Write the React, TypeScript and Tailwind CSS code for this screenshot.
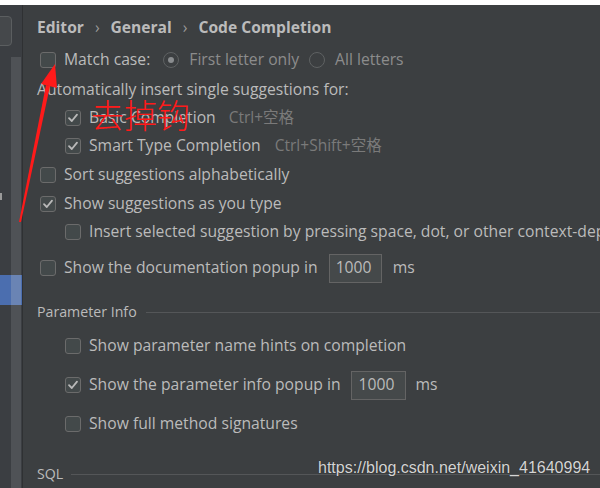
import React from "react";

const font = { fontFamily: '"Open Sans", "Noto Sans CJK SC", sans-serif' };

function Check({ checked }: { checked?: boolean }) {
  return (
    <div className="w-[16px] h-[16px] shrink-0 rounded-[3px] border border-[#6b6b6b] bg-[#43494a] flex items-center justify-center">
      {checked && (
        <svg width="12" height="12" viewBox="0 0 12 12">
          <path d="M2 6.2 L4.8 9 L10 2.6" fill="none" stroke="#b9b9b9" strokeWidth="1.8" strokeLinecap="round" strokeLinejoin="round" />
        </svg>
      )}
    </div>
  );
}

function Radio({ on }: { on?: boolean }) {
  return (
    <div className="w-[16px] h-[16px] shrink-0 rounded-full border border-[#5f6263] bg-[#3c3f41] flex items-center justify-center">
      {on && <div className="w-[6px] h-[6px] rounded-full bg-[#8a8d8f]" />}
    </div>
  );
}

function Row({ h, indent, checked, children, cls }: { h: string; indent?: boolean; checked?: boolean; children: React.ReactNode; cls?: string }) {
  return (
    <div className={`flex items-center ${h} ${indent ? "pl-[28px]" : "pl-[3px]"} ${cls ?? ""}`}>
      <Check checked={checked} />
      <div className="ml-[8px] flex items-center whitespace-nowrap">{children}</div>
    </div>
  );
}

function Section({ title, cls, lineCls }: { title: string; cls: string; lineCls?: string }) {
  return (
    <div className={`flex items-center h-[22px] ${cls}`}>
      <span className="text-[14.2px] text-[#bbbbbb] whitespace-nowrap">{title}</span>
      <div className={`flex-1 h-px bg-[#545658] ${lineCls ?? "ml-[9px]"}`} />
    </div>
  );
}

export default function App() {
  return (
    <div className="relative w-[600px] h-[488px] overflow-hidden bg-[#3c3f41] text-[#bbbbbb] text-[15.7px]" style={font}>
      <div className="h-[5px] bg-white" />
      <div className="flex h-[483px]">
        {/* sidebar */}
        <div className="relative w-[23px] shrink-0 bg-[#3b3e42] border-r border-[#2f3133]">
          <div className="absolute left-[-6px] top-[11px] w-[18px] h-[30px] rounded-[4px] border border-[#5b5e60] bg-[#45484b]" />
          <div className="absolute left-[11px] top-[52px] w-[10px] bottom-0 bg-[#4f5256]" />
          <div className="absolute left-0 top-[270px] w-[22px] h-[30px] bg-[#4b6eaf]" />
          <div className="absolute left-[11px] top-[270px] w-[10px] h-[30px] bg-[#6a84b4]" />
          <div className="absolute left-0 top-[188px] w-[2px] h-[7px] bg-[#9a9a9a]" />
        </div>
        {/* main */}
        <div className="flex-1 min-w-0 pl-[14px] pt-[8px] flex flex-col">
          <div className="flex items-center h-[30px] font-bold text-[15.6px] whitespace-nowrap">
            <span>Editor</span>
            <span className="mx-[11px] font-normal text-[#9a9a9a]">›</span>
            <span>General</span>
            <span className="mx-[11px] font-normal text-[#9a9a9a]">›</span>
            <span>Code Completion</span>
          </div>
          <div className="flex items-center h-[30px] mt-[2px] pl-[3px] whitespace-nowrap">
            <Check />
            <span className="ml-[8px]">Match case:</span>
            <div className="ml-[13px] flex items-center text-[#8c8c8c]">
              <Radio on />
              <span className="ml-[10px]">First letter only</span>
              <div className="ml-[10px]"><Radio /></div>
              <span className="ml-[10px]">All letters</span>
            </div>
          </div>
          <div className="flex items-center h-[29px] whitespace-nowrap">Automatically insert single suggestions for:</div>
          <Row h="h-[27px]" indent checked>
            <span>Basic Completion</span>
            <span className="ml-[13px] text-[#7a7a7a] text-[15.5px]">Ctrl+空格</span>
          </Row>
          <Row h="h-[30px]" indent checked>
            <span>Smart Type Completion</span>
            <span className="ml-[14px] text-[#7a7a7a] text-[15.5px]">Ctrl+Shift+空格</span>
          </Row>
          <Row h="h-[28px]">
            <span>Sort suggestions alphabetically</span>
          </Row>
          <Row h="h-[30px]" checked>
            <span>Show suggestions as you type</span>
          </Row>
          <Row h="h-[26px]" indent>
            <span>Insert selected suggestion by pressing space, dot, or other context-dependent keys</span>
          </Row>
          <Row h="h-[30px]" cls="mt-[8px]">
            <span>Show the documentation popup in</span>
            <div className="ml-[11px] w-[53px] h-[29px] shrink-0 border border-[#646464] bg-[#45494a] flex items-center pl-[6px] text-[#bbbbbb]">1000</div>
            <span className="ml-[11px]">ms</span>
          </Row>
          <Section title="Parameter Info" cls="mt-[18px]" />
          <Row h="h-[46px]" indent>
            <span>Show parameter name hints on completion</span>
          </Row>
          <Row h="h-[32px]" indent checked>
            <span>Show the parameter info popup in</span>
            <div className="ml-[10px] w-[55px] h-[29px] shrink-0 border border-[#646464] bg-[#45494a] flex items-center pl-[7px] text-[#bbbbbb]">1000</div>
            <span className="ml-[10px]">ms</span>
          </Row>
          <Row h="h-[46px]" indent>
            <span>Show full method signatures</span>
          </Row>
          <Section title="SQL" cls="mt-[16px]" lineCls="ml-[8px]" />
        </div>
      </div>

      {/* annotations */}
      <svg className="absolute left-0 top-0 pointer-events-none" width="600" height="488">
        <polygon points="19,222 21,222 50,86 46,85" fill="#ff1a1a" />
        <polygon points="55,64 57,88 41,84" fill="#ff1a1a" />
      </svg>
      <div
        className="absolute left-[91px] top-[92px] text-[33px] leading-[44px] text-[#ff1a1a] whitespace-nowrap"
        style={{ fontFamily: '"Noto Sans CJK SC", sans-serif', fontWeight: 300 }}
      >
        去掉钩
      </div>
      <div
        className="absolute left-[318px] top-[458px] text-[16px] leading-[20px] text-[#d4d4d4] whitespace-nowrap"
        style={{ fontFamily: '"Liberation Sans", Arial, sans-serif', textShadow: "0 0 1px #222" }}
      >
        https://blog.csdn.net/weixin_41640994
      </div>
    </div>
  );
}
